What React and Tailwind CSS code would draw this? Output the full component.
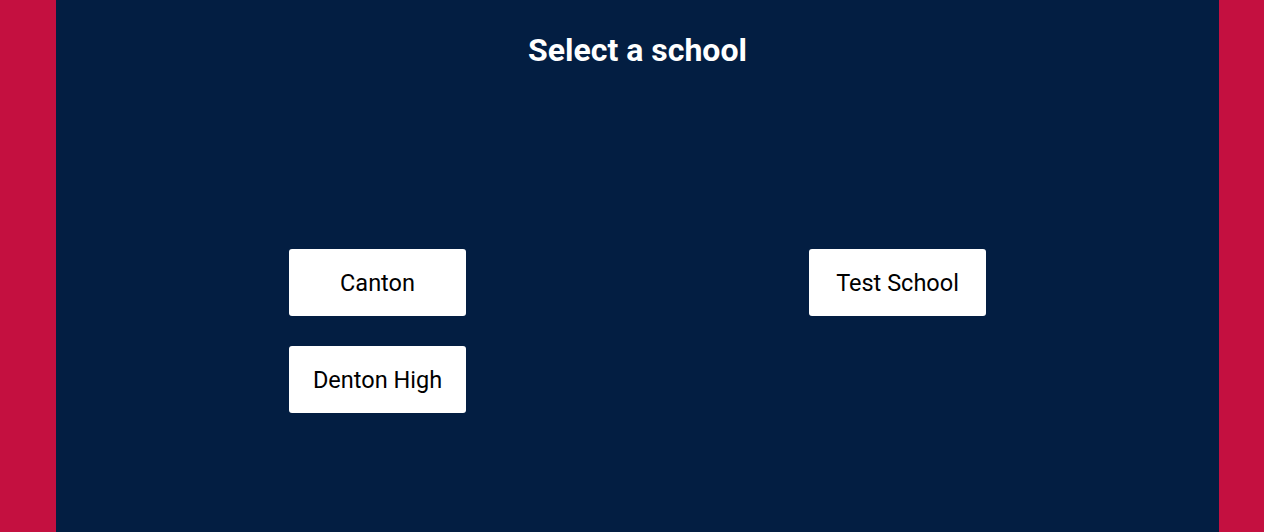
const schools = ['Canton', 'Test School', 'Denton High'];

const App = () => {
  return (
    <div className="flex h-[532px] w-full bg-[#c41040]" style={{ fontFamily: 'Roboto, "Liberation Sans", sans-serif' }}>
      <div className="w-[56px] shrink-0" />
      <main className="flex-1 bg-[#031e42]">
        <h1 className="pt-[28px] text-center text-[32px] font-bold leading-[44px] text-white">
          Select a school
        </h1>
        <div className="mx-auto mt-[177px] grid w-[1040px] grid-cols-2 gap-y-[30px]">
          {schools.map((name) => (
            <div key={name} className="flex justify-center">
              <button className="flex h-[67px] w-[177px] items-center justify-center rounded-[3px] bg-white pt-[3px] text-[23.5px] leading-none text-black">
                {name}
              </button>
            </div>
          ))}
        </div>
      </main>
      <div className="w-[45px] shrink-0" />
    </div>
  );
};

export default App;
